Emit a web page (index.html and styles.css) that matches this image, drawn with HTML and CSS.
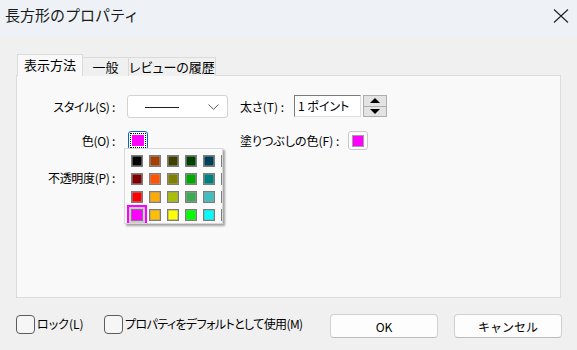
FILE: index.html
```html
<!DOCTYPE html>
<html lang="ja">
<head>
  <meta charset="UTF-8" />
  <title>長方形のプロパティ</title>
  <link rel="stylesheet" href="styles.css">
</head>
<body>
  <div class="dialog">
    <header class="titlebar">
      <span class="title">長方形のプロパティ</span>
      <svg class="close" width="16" height="14" viewBox="0 0 16 14">
        <path d="M1 0.5 L15 13.5 M15 0.5 L1 13.5" stroke="#1f1f1f" stroke-width="1.1" fill="none" />
      </svg>
    </header>

    <main class="content">
      <div class="tabs">
        <div class="tab active">表示方法</div>
        <div class="tab tab-general">一般</div>
        <div class="tab tab-review">レビューの履歴</div>
      </div>

      <section class="panel">
        <div class="row row-style">
          <label class="lbl">スタイル(S) :</label>
          <div class="combo">
            <span class="line-sample"></span>
            <svg class="chevron" width="11" height="6" viewBox="0 0 11 6">
              <polyline points="0.5,0.5 5.5,5.3 10.5,0.5" stroke="#5a5a5a" stroke-width="1" fill="none" />
            </svg>
          </div>
          <label class="lbl2 lbl-width">太さ(T) :</label>
          <div class="spin-input">1 ポイント</div>
          <div class="spin-btns">
            <div class="spin-btn"><span class="tri up"></span></div>
            <div class="spin-btn"><span class="tri down"></span></div>
          </div>
        </div>

        <div class="row row-color">
          <label class="lbl">色(O) :</label>
          <div class="color-cell">
            <div class="color-btn focused">
              <span class="focus-ring"><span class="fill"></span></span>
            </div>
            <!-- open colour dropdown -->
            <div class="palette">
              <div class="swatches">
                <span class="sw" style="background:#000000"></span>
                <span class="sw" style="background:#a33f00"></span>
                <span class="sw" style="background:#3f3f00"></span>
                <span class="sw" style="background:#003f00"></span>
                <span class="sw" style="background:#003f55"></span>
                <span class="sw" style="background:#1f1f7f"></span>
                <span class="sw" style="background:#7f0000"></span>
                <span class="sw" style="background:#ff5500"></span>
                <span class="sw" style="background:#7f7f00"></span>
                <span class="sw" style="background:#00aa00"></span>
                <span class="sw" style="background:#007f7f"></span>
                <span class="sw" style="background:#0000ff"></span>
                <span class="sw" style="background:#ff0000"></span>
                <span class="sw" style="background:#ffaa00"></span>
                <span class="sw" style="background:#aabf00"></span>
                <span class="sw" style="background:#3faa55"></span>
                <span class="sw" style="background:#3fbfbf"></span>
                <span class="sw" style="background:#3f55ff"></span>
                <span class="sw selected" style="background:#ff00ff"></span>
                <span class="sw" style="background:#ffbf00"></span>
                <span class="sw" style="background:#ffff00"></span>
                <span class="sw" style="background:#00ff00"></span>
                <span class="sw" style="background:#00ffff"></span>
                <span class="sw" style="background:#00bfff"></span>
              </div>
            </div>
          </div>
          <label class="lbl2 lbl-fill">塗りつぶしの色(F) :</label>
          <div class="color-btn plain"><span class="fill"></span></div>
        </div>

        <div class="row row-opacity">
          <label class="lbl">不透明度(P) :</label>
        </div>
      </section>
    </main>

    <footer class="footer">
      <label class="check check-lock"><span class="box"></span><span class="check-text">ロック(L)</span></label>
      <label class="check"><span class="box"></span><span class="check-text tight">プロパティをデフォルトとして使用(M)</span></label>
      <div class="buttons">
        <button class="btn">OK</button>
        <button class="btn">キャンセル</button>
      </div>
    </footer>
  </div>
</body>
</html>
```

FILE: styles.css
```css
* {
  box-sizing: border-box;
}
body {
  margin: 0;
  width: 577px;
  height: 350px;
  overflow: hidden;
  background: #f0f0f0;
  font-family: "Noto Sans CJK JP", "Noto Sans", sans-serif;
  font-size: 12px;
  color: #000;
  font-feature-settings: "palt";
}
.dialog {
  width: 577px;
  height: 350px;
  background: #f0f0f0;
}
.titlebar {
  height: 36px;
  background: #eef2f7;
  display: flex;
  justify-content: space-between;
  align-items: flex-start;
}
.title {
  margin: 5px 0 0 5px;
  font-size: 15px;
  line-height: 20px;
  color: #1a1a1a;
  font-feature-settings: normal;
}
.close {
  margin: 9px 8px 0 0;
}

.content {
  padding: 18px 16px 0 16px;
}
.tabs {
  display: flex;
  align-items: flex-end;
  height: 22px;
  margin-left: 1px;
  margin-bottom: -1px;
}
.tab {
  height: 19px;
  line-height: 18px;
  text-align: center;
  border: 1px solid #dadada;
  border-bottom: none;
  background: #f0f0f0;
  font-size: 13px;
}
.tab + .tab {
  border-left: none;
}
.tab.active {
  position: relative;
  z-index: 1;
  width: 66px;
  height: 22px;
  line-height: 20px;
  background: #f9f9f9;
  font-feature-settings: normal;
}
.tab-general {
  width: 46px;
}
.tab-review {
  width: 87px;
}
.panel {
  height: 223px;
  border: 1px solid #dcdcdc;
  background: #f9f9f9;
  padding-top: 19px;
}

.row {
  display: flex;
  align-items: center;
}
.lbl {
  width: 98px;
  margin-right: 12px;
  text-align: right;
  white-space: nowrap;
  letter-spacing: -0.3px;
}
.lbl2 {
  margin-left: 12px;
  white-space: nowrap;
}
.lbl-width {
  width: 54px;
}
.lbl-fill {
  width: 108px;
}
.row-style {
  height: 23px;
}
.combo {
  width: 101px;
  height: 23px;
  border: 1px solid #d3d3d3;
  border-radius: 3px;
  background: #fff;
  display: flex;
  align-items: center;
  padding-left: 17px;
}
.line-sample {
  width: 34px;
  height: 1px;
  background: #1e1e1e;
  margin-top: 1px;
}
.chevron {
  margin-left: auto;
  margin-right: 8px;
  margin-top: 1px;
}
.spin-input {
  width: 67px;
  height: 22px;
  border: 1px solid;
  border-color: #7a7a7a #dedede #dedede #7a7a7a;
  background: #fff;
  padding-left: 3px;
  line-height: 20px;
  align-self: flex-start;
}
.spin-btns {
  margin-left: 2px;
  width: 24px;
  height: 22px;
  align-self: flex-start;
  display: flex;
  flex-direction: column;
}
.spin-btn {
  flex: 1;
  border: 1px solid #adadad;
  background: #e3e3e3;
  display: flex;
  align-items: center;
  justify-content: center;
}
.spin-btn + .spin-btn {
  border-top: none;
}
.tri {
  width: 0;
  height: 0;
  border-left: 5px solid transparent;
  border-right: 5px solid transparent;
}
.tri.up {
  border-bottom: 5px solid #000;
}
.tri.down {
  border-top: 5px solid #000;
}

.row-color {
  margin-top: 13px;
  height: 19px;
}
.color-cell {
  position: relative;
  width: 101px;
  height: 19px;
}
.color-btn {
  width: 20px;
  height: 19px;
  border-radius: 3px;
}
.color-btn.focused {
  margin-left: 1px;
  border: 1px solid #0067c0;
  padding: 1px;
  background: #fff;
}
.focus-ring {
  display: block;
  height: 100%;
  border: 1px dotted #000;
  padding: 1px;
}
.fill {
  display: block;
  width: 12px;
  height: 12px;
  background: #ff00ff;
}
.focus-ring .fill {
  width: 100%;
  height: 100%;
}
.color-btn.plain {
  border: 1px solid #c9c9c9;
  background: #fbfbfb;
  display: flex;
  align-items: center;
  justify-content: center;
}
.color-btn.plain .fill {
  border: 1px solid #a0a0a0;
}

.palette {
  position: absolute;
  left: -3px;
  top: 17px;
  z-index: 5;
  width: 99px;
  height: 76px;
  overflow: hidden;
  background: #fafafa;
  border: 1px solid #d8d8d8;
  box-shadow: 2px 2px 2px rgba(0, 0, 0, 0.35);
  padding: 6px 0 0 6px;
}
.swatches {
  display: grid;
  grid-template-columns: repeat(6, 12px);
  grid-auto-rows: 12px;
  gap: 6px;
}
.sw {
  width: 12px;
  height: 12px;
  border: 1px solid #7c7c7c;
  box-shadow: inset 0 0 0 0.5px #9a9a9a;
}
.sw.selected {
  box-shadow: 0 0 0 2px #d6c2d6, 0 0 0 4px #ff00ff;
}

.row-opacity {
  margin-top: 19px;
  line-height: 17px;
}

.footer {
  margin-top: 16px;
  display: flex;
  align-items: flex-start;
  padding: 0 15px 0 16px;
}
.check {
  display: flex;
  align-items: flex-start;
  margin-top: 1px;
}
.check-lock {
  width: 88px;
}
.box {
  width: 19px;
  height: 19px;
  border: 1px solid #5c5c5c;
  border-radius: 4px;
  background: #f6f6f6;
}
.check-text {
  margin-left: 2px;
  line-height: 17px;
  white-space: nowrap;
}
.check-text.tight {
  letter-spacing: -0.6px;
}
.buttons {
  margin-left: auto;
  display: flex;
  gap: 16px;
}
.btn {
  width: 108px;
  height: 24px;
  border: 1px solid #d0d0d0;
  border-bottom-color: #bdbdbd;
  border-radius: 4px;
  background: #fdfdfd;
  font-family: inherit;
  font-size: 12px;
  color: #000;
  padding: 0;
}
```
